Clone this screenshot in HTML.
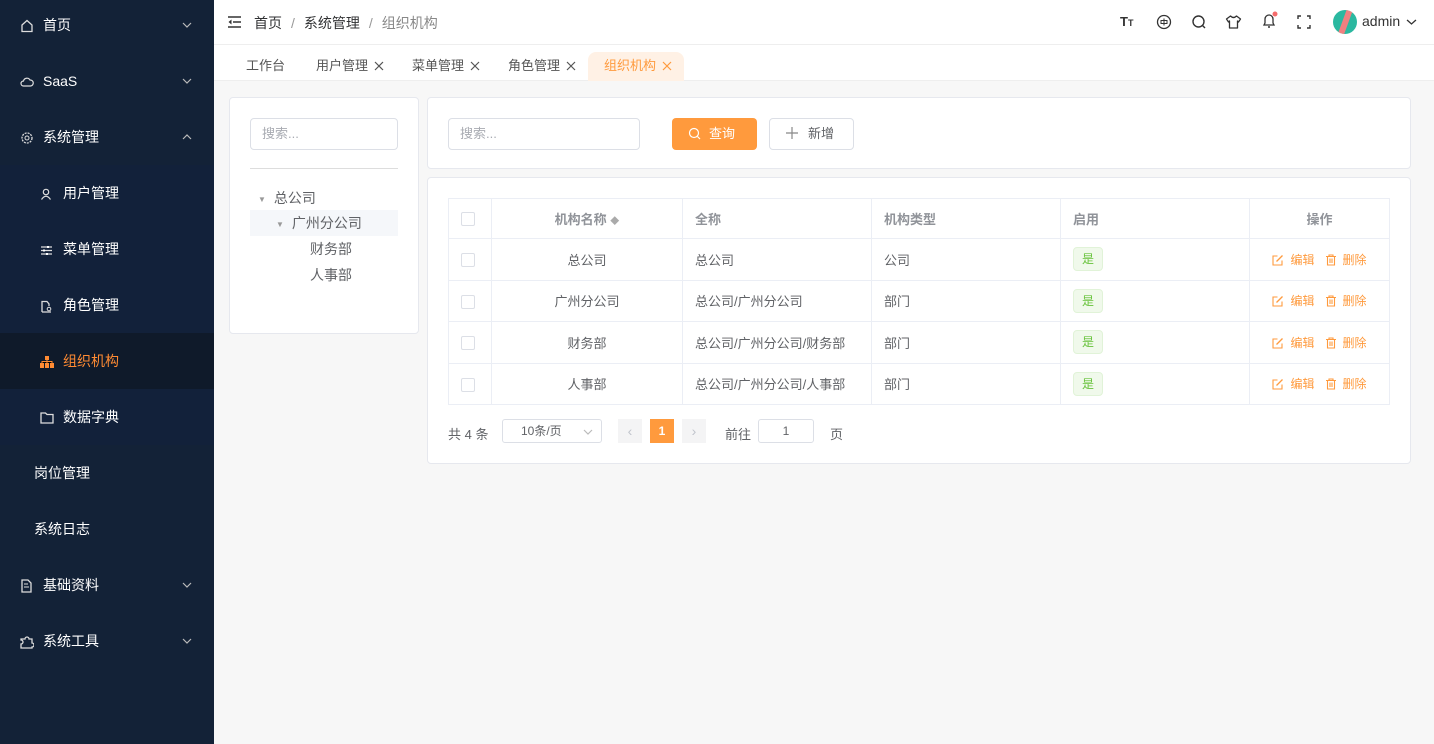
<!DOCTYPE html><html><head><meta charset="utf-8"><style>
*{box-sizing:border-box;margin:0;padding:0}
body{width:1434px;height:744px;overflow:hidden;font-family:"Liberation Sans","Noto Sans CJK SC",sans-serif;font-size:14px;color:#303133;background:#f7f7f7;position:relative}
.side{position:absolute;left:0;top:0;width:214px;height:744px;background:#132237;color:#fff}
.mi{position:absolute;left:0;width:214px;height:56px;line-height:56px;font-size:14px;font-weight:normal}
.mi .ic{position:absolute;left:20px;top:0;width:14px;color:#ddd}
.mi .ic svg{vertical-align:middle}
.mi .t{position:absolute;left:43px}
.mi .ar{position:absolute;right:22px;top:23px;width:10px;height:10px}
.sub .t{left:63px}.sub .ic{left:40px}
.act{background:#0f1a2a;color:#ff8b33}
.hd{position:absolute;left:214px;top:0;right:0;height:45px;background:#fff;border-bottom:1px solid #eee}
.tabs{position:absolute;left:214px;top:45px;right:0;height:36px;background:#fff;border-bottom:1px solid #eee;font-size:13px;color:#555}
.tab{position:absolute;top:7px;height:29px;line-height:27px}
.x{display:inline-block;margin-left:6px;vertical-align:-1px}
.card{position:absolute;background:#fff;border:1px solid #e6e8ee;border-radius:4px}
.inp{position:absolute;border:1px solid #dcdfe6;border-radius:4px;height:32px;line-height:30px;padding-left:11px;color:#a8abb2;font-size:13px;background:#fff}
table{position:absolute;left:448px;top:198px;width:942px;border-collapse:collapse;font-size:13px;color:#606266}
td,th{border:1px solid #ebeef5;height:41.5px;padding:0 12px;text-align:left}
th{height:40px;color:#909399;font-weight:bold;background:#fff}
.cb{display:inline-block;width:14px;height:14px;border:1px solid #dcdfe6;border-radius:2px;vertical-align:middle}
.tag{display:inline-block;padding:0 8px;height:24px;line-height:22px;border:1px solid #e1f3d8;background:#f0f9eb;color:#67c23a;border-radius:4px;font-size:12px}
.op{color:#ff9a3d;font-size:12px}
.op svg{vertical-align:-2px;margin-right:6px}
</style></head><body>
<svg width="0" height="0" style="position:absolute"><defs>
<symbol id="dn" viewBox="0 0 10 10"><path d="M1 3L5 7L9 3" fill="none" stroke="#bbb" stroke-width="1.2"/></symbol>
<symbol id="up" viewBox="0 0 10 10"><path d="M1 7L5 3L9 7" fill="none" stroke="#bbb" stroke-width="1.2"/></symbol>
<symbol id="cx" viewBox="0 0 10 10"><path d="M1 1L9 9M9 1L1 9" stroke="currentColor" stroke-width="1.2"/></symbol>
<symbol id="ed" viewBox="0 0 12 12"><path d="M10 6.5V11H1V2H5.5" fill="none" stroke="#ff9a3d" stroke-width="1.1"/><path d="M4.5 7.5L10.5 1.5" stroke="#ff9a3d" stroke-width="1.3"/></symbol>
<symbol id="dl" viewBox="0 0 12 12"><path d="M1 2.5H11M4 2.5V1H8V2.5M2.5 2.5V11H9.5V2.5M5 4.5V9M7 4.5V9" fill="none" stroke="#ff9a3d" stroke-width="1.1"/></symbol>
</defs></svg>
<div class="side">
<div class="mi" style="top:-3px"><span class="ic"><svg width="14" height="14" viewBox="0 0 14 14"><path d="M2 6L7 1.5L12 6V12.5H2Z" fill="none" stroke="#ddd" stroke-width="1.3"/></svg></span><span class="t">首页</span><svg class="ar"><use href="#dn"/></svg></div>
<div class="mi" style="top:53px"><span class="ic"><svg width="14" height="14" viewBox="0 0 14 14"><path d="M3.5 11H10.5A3 3 0 0 0 10 5A3.5 3.5 0 0 0 3.5 6A2.5 2.5 0 0 0 3.5 11Z" fill="none" stroke="#ddd" stroke-width="1.2"/></svg></span><span class="t">SaaS</span><svg class="ar"><use href="#dn"/></svg></div>
<div class="mi" style="top:109px"><span class="ic"><svg width="14" height="14" viewBox="0 0 14 14"><circle cx="7" cy="7" r="5" fill="none" stroke="#ddd" stroke-width="1.3" stroke-dasharray="2 1"/><circle cx="7" cy="7" r="2" fill="none" stroke="#ddd"/></svg></span><span class="t">系统管理</span><svg class="ar"><use href="#up"/></svg></div>
<div style="position:absolute;top:165px;left:0;width:214px;height:280px;background:#12213a"></div>
<div class="mi sub" style="top:165px"><span class="ic"><svg width="12" height="14" viewBox="0 0 12 14"><circle cx="6" cy="5" r="2.7" fill="none" stroke="#ddd" stroke-width="1.2"/><path d="M1.5 12.5Q6 6 10.5 12.5" fill="none" stroke="#ddd" stroke-width="1.2"/></svg></span><span class="t">用户管理</span></div>
<div class="mi sub" style="top:221px"><span class="ic"><svg width="13" height="13" viewBox="0 0 13 13"><path d="M1 3H12M1 6.5H12M1 10H12" stroke="#ddd" stroke-width="1.2"/><rect x="7" y="2" width="2" height="2" fill="#fff"/><rect x="3" y="5.5" width="2" height="2" fill="#fff"/><rect x="6" y="9" width="2" height="2" fill="#fff"/></svg></span><span class="t">菜单管理</span></div>
<div class="mi sub" style="top:277px"><span class="ic"><svg width="13" height="13" viewBox="0 0 13 13"><path d="M2 12V1.5H7L9 4V6M2 12H11" fill="none" stroke="#ddd" stroke-width="1.3"/><circle cx="9" cy="9" r="1.8" fill="none" stroke="#ddd"/></svg></span><span class="t">角色管理</span></div>
<div class="mi sub act" style="top:333px"><span class="ic"><svg width="14" height="12" viewBox="0 0 14 12"><rect x="5" y="0" width="4" height="4" fill="#ff8b33"/><rect x="0" y="7" width="4" height="5" fill="#ff8b33"/><rect x="5" y="7" width="4" height="5" fill="#ff8b33"/><rect x="10" y="7" width="4" height="5" fill="#ff8b33"/><path d="M2 7V5.5H12V7M7 4V7" stroke="#ff8b33"/></svg></span><span class="t">组织机构</span></div>
<div class="mi sub" style="top:389px"><span class="ic"><svg width="14" height="12" viewBox="0 0 14 12"><path d="M1 1H5.5L7 2.5H13V11H1Z" fill="none" stroke="#ddd" stroke-width="1.3"/></svg></span><span class="t">数据字典</span></div>
<div class="mi" style="top:445px"><span class="t" style="left:34px">岗位管理</span></div>
<div class="mi" style="top:501px"><span class="t" style="left:34px">系统日志</span></div>
<div class="mi" style="top:557px"><span class="ic"><svg width="14" height="14" viewBox="0 0 14 14"><path d="M2 1H8L11 4V13H2Z" fill="none" stroke="#ddd" stroke-width="1.3"/><path d="M4 5H8M4 8H9" stroke="#ddd"/></svg></span><span class="t">基础资料</span><svg class="ar"><use href="#dn"/></svg></div>
<div class="mi" style="top:613px"><span class="ic"><svg width="14" height="14" viewBox="0 0 14 14"><path d="M1 4H5A2 2 0 0 1 9 4H12V8A2 2 0 0 1 12 12V13H1V9A2 2 0 0 0 1 5Z" fill="none" stroke="#ddd" stroke-width="1.3"/></svg></span><span class="t">系统工具</span><svg class="ar"><use href="#dn"/></svg></div>
</div>
<div class="hd">
<svg style="position:absolute;left:14px;top:16px" width="13" height="12" viewBox="0 0 13 12"><path d="M0 1H13M5 6H13M0 11H13" stroke="#333" stroke-width="1.6"/><path d="M3.5 3.5L0.5 6L3.5 8.5" fill="#333"/></svg>
<div style="position:absolute;left:40px;top:13px;font-size:14px"><span style="color:#303133">首页</span><span style="color:#999;margin:0 9px">/</span><span>系统管理</span><span style="color:#999;margin:0 9px">/</span><span style="color:#888">组织机构</span></div>
<div style="position:absolute;left:906px;top:14px;font-size:13px;font-weight:bold;color:#333">T<span style="font-size:9px">T</span></div>
<svg style="position:absolute;left:942px;top:14px" width="16" height="16"><circle cx="8" cy="8" r="6.5" fill="none" stroke="#333" stroke-width="1.3"/><path d="M5 6.5H11V9.5H5ZM8 4.5V11.5" fill="none" stroke="#333"/></svg>
<svg style="position:absolute;left:977px;top:14px" width="16" height="16"><circle cx="7.5" cy="7.5" r="5.5" fill="none" stroke="#333" stroke-width="1.4"/><path d="M11.5 11.5L14 14" stroke="#333" stroke-width="1.4"/></svg>
<svg style="position:absolute;left:1011px;top:14px" width="17" height="16"><path d="M5.5 2L1.5 5L3.5 8L4.5 7V14H12.5V7L13.5 8L15.5 5L11.5 2Q8.5 5 5.5 2Z" fill="none" stroke="#333" stroke-width="1.3" stroke-linejoin="round"/></svg>
<svg style="position:absolute;left:1047px;top:11px" width="18" height="20"><path d="M3 14H13L12 12V8A4 4 0 0 0 4 8V12Z" fill="none" stroke="#333" stroke-width="1.3"/><path d="M7 16H9" stroke="#333" stroke-width="1.5"/><circle cx="14" cy="3" r="2.5" fill="#f56c6c"/></svg>
<svg style="position:absolute;left:1083px;top:15px" width="14" height="14"><path d="M1 4V1H4M10 1H13V4M13 10V13H10M4 13H1V10" fill="none" stroke="#333" stroke-width="1.4"/></svg>
<div style="position:absolute;left:1119px;top:10px;width:24px;height:24px;border-radius:50%;background:#2bb8a0;overflow:hidden"><div style="position:absolute;left:9px;top:-2px;width:6px;height:30px;background:#f08080;transform:rotate(20deg)"></div></div>
<div style="position:absolute;left:1148px;top:13px;font-size:14px;color:#333">admin</div>
<svg style="position:absolute;left:1192px;top:17px" width="11" height="10"><use href="#dn" style="color:#333"/><path d="M1 3L5.5 7L10 3" fill="none" stroke="#333" stroke-width="1.2"/></svg>
</div>
<div class="tabs">
<div class="tab" style="left:32px">工作台</div>
<div class="tab" style="left:102px">用户管理<svg class="x" width="10" height="10"><use href="#cx"/></svg></div>
<div class="tab" style="left:198px">菜单管理<svg class="x" width="10" height="10"><use href="#cx"/></svg></div>
<div class="tab" style="left:294px">角色管理<svg class="x" width="10" height="10"><use href="#cx"/></svg></div>
<div class="tab" style="left:374px;width:96px;padding-left:16px;background:#fff1e5;color:#ff9a3d;border-radius:8px 8px 0 0">组织机构<svg class="x" width="10" height="10"><use href="#cx"/></svg></div>
</div>
<div class="card" style="left:229px;top:97px;width:190px;height:237px">
<div class="inp" style="left:20px;top:20px;width:148px">搜索...</div>
<div style="position:absolute;left:20px;top:70px;width:148px;border-top:1px solid #ddd"></div>
<div style="position:absolute;left:20px;top:112px;width:148px;height:26px;background:#f5f7fa"></div>
<div style="position:absolute;left:28px;top:87px;font-size:14px;color:#606266;line-height:26px"><span style="font-size:8px;color:#999;margin-right:8px;vertical-align:1px">▼</span>总公司</div>
<div style="position:absolute;left:46px;top:112px;font-size:14px;color:#606266;line-height:26px"><span style="font-size:8px;color:#999;margin-right:8px;vertical-align:1px">▼</span>广州分公司</div>
<div style="position:absolute;left:80px;top:138px;font-size:14px;color:#606266;line-height:26px">财务部</div>
<div style="position:absolute;left:80px;top:164px;font-size:14px;color:#606266;line-height:26px">人事部</div>
</div>
<div class="card" style="left:427px;top:97px;width:984px;height:72px">
<div class="inp" style="left:20px;top:20px;width:192px">搜索...</div>
<div style="position:absolute;left:244px;top:20px;width:85px;height:32px;background:#ff9a3d;border-radius:4px;color:#fff;line-height:32px;font-size:13px;padding-left:16px"><svg width="13" height="13" style="vertical-align:-2px;margin-right:8px"><circle cx="6" cy="6" r="4.5" fill="none" stroke="#fff" stroke-width="1.2"/><path d="M9.5 9.5L12 12" stroke="#fff" stroke-width="1.2"/></svg>查询</div>
<div style="position:absolute;left:341px;top:20px;width:85px;height:32px;border:1px solid #dcdfe6;border-radius:4px;color:#606266;line-height:30px;font-size:13px;padding-left:16px"><svg width="12" height="12" style="vertical-align:-1px;margin-right:10px"><path d="M6 0V12M0 6H12" stroke="#888" stroke-width="1.2"/></svg>新增</div>
</div>
<div class="card" style="left:427px;top:177px;width:984px;height:287px"></div>
<table>
<tr><th style="width:43px"><span class="cb"></span></th><th style="width:191px;text-align:center">机构名称 <span style="font-size:9px;color:#aaa">◆</span></th><th style="width:189px">全称</th><th style="width:189px">机构类型</th><th style="width:189px">启用</th><th style="text-align:center">操作</th></tr>
<tr><td><span class="cb"></span></td><td style="text-align:center">总公司</td><td>总公司</td><td>公司</td><td><span class="tag">是</span></td><td class="op" style="text-align:center"><svg width="12" height="12"><use href="#ed"/></svg>编辑 &nbsp; <svg width="12" height="12"><use href="#dl"/></svg>删除</td></tr>
<tr><td><span class="cb"></span></td><td style="text-align:center">广州分公司</td><td>总公司/广州分公司</td><td>部门</td><td><span class="tag">是</span></td><td class="op" style="text-align:center"><svg width="12" height="12"><use href="#ed"/></svg>编辑 &nbsp; <svg width="12" height="12"><use href="#dl"/></svg>删除</td></tr>
<tr><td><span class="cb"></span></td><td style="text-align:center">财务部</td><td>总公司/广州分公司/财务部</td><td>部门</td><td><span class="tag">是</span></td><td class="op" style="text-align:center"><svg width="12" height="12"><use href="#ed"/></svg>编辑 &nbsp; <svg width="12" height="12"><use href="#dl"/></svg>删除</td></tr>
<tr><td><span class="cb"></span></td><td style="text-align:center">人事部</td><td>总公司/广州分公司/人事部</td><td>部门</td><td><span class="tag">是</span></td><td class="op" style="text-align:center"><svg width="12" height="12"><use href="#ed"/></svg>编辑 &nbsp; <svg width="12" height="12"><use href="#dl"/></svg>删除</td></tr>
</table>
<div style="position:absolute;left:448px;top:424px;font-size:13px;color:#606266">共 4 条</div>
<div style="position:absolute;left:502px;top:419px;width:100px;height:24px;border:1px solid #dcdfe6;border-radius:3px;font-size:12px;color:#606266;line-height:22px;padding-left:18px">10条/页<svg style="position:absolute;right:8px;top:7px" width="10" height="10"><use href="#dn"/></svg></div>
<div style="position:absolute;left:618px;top:419px;width:24px;height:24px;background:#f4f4f5;color:#c0c4cc;text-align:center;line-height:24px">‹</div>
<div style="position:absolute;left:650px;top:419px;width:24px;height:24px;background:#ff9a3d;color:#fff;text-align:center;line-height:24px;font-size:12px;font-weight:bold">1</div>
<div style="position:absolute;left:682px;top:419px;width:24px;height:24px;background:#f4f4f5;color:#c0c4cc;text-align:center;line-height:24px">›</div>
<div style="position:absolute;left:725px;top:424px;font-size:13px;color:#606266">前往</div>
<div style="position:absolute;left:758px;top:419px;width:56px;height:24px;border:1px solid #dcdfe6;border-radius:3px;text-align:center;line-height:22px;font-size:12px;color:#606266">1</div>
<div style="position:absolute;left:830px;top:424px;font-size:13px;color:#606266">页</div>
</body></html>
